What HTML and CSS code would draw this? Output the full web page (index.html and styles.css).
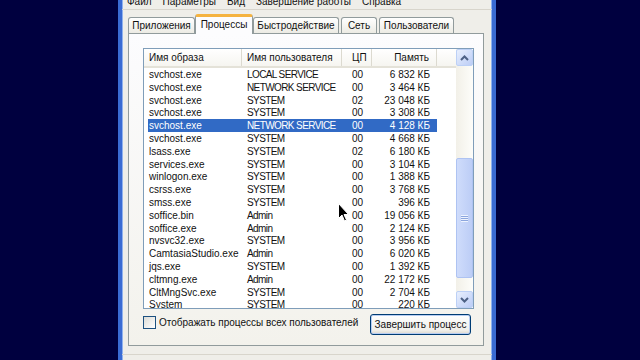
FILE: index.html
```html
<html>
    <head>
        <title>Диспетчер задач Windows</title>
        <link rel="stylesheet" href="styles.css">
    </head>
    <body>
        <div class="window">
            <div class="menubar">
                <span class="menu">Файл</span>
                <span class="menu">Параметры</span>
                <span class="menu">Вид</span>
                <span class="menu">Завершение работы</span>
                <span class="menu">Справка</span>
            </div>

            <div class="tabs">
                <div class="tab t1">Приложения</div>
                <div class="tab tab-sel">Процессы</div>
                <div class="tab t3">Быстродействие</div>
                <div class="tab t4">Сеть</div>
                <div class="tab t5">Пользователи</div>
            </div>

            <div class="panel">
                <div class="list">
                    <div class="list-body">
                        <div class="head">
                            <span>Имя образа</span>
                            <span>Имя пользователя</span>
                            <span class="cpu">ЦП</span>
                            <span class="mem">Память</span>
                            <span class="last"></span>
                        </div>
                        <div class="row"><span>svchost.exe</span><span>LOCAL SERVICE</span><span class="cpu">00</span><span class="mem">6 832 КБ</span></div>
                        <div class="row"><span>svchost.exe</span><span>NETWORK SERVICE</span><span class="cpu">00</span><span class="mem">3 464 КБ</span></div>
                        <div class="row"><span>svchost.exe</span><span>SYSTEM</span><span class="cpu">02</span><span class="mem">23 048 КБ</span></div>
                        <div class="row"><span>svchost.exe</span><span>SYSTEM</span><span class="cpu">00</span><span class="mem">3 308 КБ</span></div>
                        <div class="row sel"><span>svchost.exe</span><span>NETWORK SERVICE</span><span class="cpu">00</span><span class="mem">4 128 КБ</span></div>
                        <div class="row"><span>svchost.exe</span><span>SYSTEM</span><span class="cpu">00</span><span class="mem">4 668 КБ</span></div>
                        <div class="row"><span>lsass.exe</span><span>SYSTEM</span><span class="cpu">02</span><span class="mem">6 180 КБ</span></div>
                        <div class="row"><span>services.exe</span><span>SYSTEM</span><span class="cpu">00</span><span class="mem">3 104 КБ</span></div>
                        <div class="row"><span>winlogon.exe</span><span>SYSTEM</span><span class="cpu">00</span><span class="mem">1 388 КБ</span></div>
                        <div class="row"><span>csrss.exe</span><span>SYSTEM</span><span class="cpu">00</span><span class="mem">3 768 КБ</span></div>
                        <div class="row"><span>smss.exe</span><span>SYSTEM</span><span class="cpu">00</span><span class="mem">396 КБ</span></div>
                        <div class="row"><span>soffice.bin</span><span>Admin</span><span class="cpu">00</span><span class="mem">19 056 КБ</span></div>
                        <div class="row"><span>soffice.exe</span><span>Admin</span><span class="cpu">00</span><span class="mem">2 124 КБ</span></div>
                        <div class="row"><span>nvsvc32.exe</span><span>SYSTEM</span><span class="cpu">00</span><span class="mem">3 956 КБ</span></div>
                        <div class="row"><span>CamtasiaStudio.exe</span><span>Admin</span><span class="cpu">00</span><span class="mem">6 020 КБ</span></div>
                        <div class="row"><span>jqs.exe</span><span>SYSTEM</span><span class="cpu">00</span><span class="mem">1 392 КБ</span></div>
                        <div class="row"><span>cltmng.exe</span><span>Admin</span><span class="cpu">00</span><span class="mem">22 172 КБ</span></div>
                        <div class="row"><span>CltMngSvc.exe</span><span>SYSTEM</span><span class="cpu">00</span><span class="mem">2 704 КБ</span></div>
                        <div class="row"><span>System</span><span>SYSTEM</span><span class="cpu">00</span><span class="mem">220 КБ</span></div>
                    </div>
                    <div class="scroll">
                        <div class="sbtn">
                            <svg width="9" height="6" viewBox="0 0 9 6"><path d="M1 5 L4.5 1.5 L8 5" fill="none" stroke="#4d6185" stroke-width="2"/></svg>
                        </div>
                        <div class="track">
                            <div class="thumb">
                                <div class="grip"></div>
                            </div>
                        </div>
                        <div class="sbtn">
                            <svg width="9" height="6" viewBox="0 0 9 6"><path d="M1 1 L4.5 4.5 L8 1" fill="none" stroke="#4d6185" stroke-width="2"/></svg>
                        </div>
                    </div>
                </div>

                <div class="foot">
                    <label class="check"><span class="box"></span>Отображать процессы всех пользователей</label>
                    <button class="button">Завершить процесс</button>
                </div>
            </div>

            <div class="status"></div>
        </div>

        <svg class="cursor" width="12" height="19" viewBox="0 0 12 19">
            <path d="M0.5 0.5 L0.5 15.5 L4 12 L6.5 18 L8.5 17 L6 11.5 L10.5 11.5 Z" fill="#000" stroke="#fff" stroke-width="1"/>
        </svg>
    </body>
</html>
```

FILE: styles.css
```css
* {
    box-sizing: border-box;
}

body {
    margin: 0;
    width: 640px;
    height: 360px;
    overflow: hidden;
    background-color: #00003f;
    font-family: "Liberation Sans", Arial, sans-serif;
    font-size: 10px;
    color: #111;
    position: relative;
}

.window {
    margin-left: 118px;
    margin-top: -7px;
    width: 378px;
    height: 380px;
    background-color: #efeee9;
    border-left: 4px solid #3a6bd3;
    border-right: 4px solid #3a6bd3;
    box-shadow: inset 1px 0 #8fb1ee, inset -1px 0 #8fb1ee;
    display: flex;
    flex-direction: column;
}

.menubar {
    height: 17px;
    display: flex;
    align-items: center;
    gap: 11px;
    padding-left: 5px;
    border-bottom: 1px solid #d8d5cc;
}

.tabs {
    display: flex;
    align-items: flex-end;
    height: 19px;
    margin-top: 4px;
    padding-left: 6px;
    position: relative;
    z-index: 1;
}

.tab {
    height: 16px;
    line-height: 15px;
    text-align: center;
    border: 1px solid #919b9c;
    border-bottom: none;
    border-radius: 3px 3px 0 0;
    background: linear-gradient(#ffffff, #ecebe4);
}

.t1 { width: 67px; }
.t3 { width: 86px; }
.t4 { width: 36px; margin-left: 2px; }
.t5 { width: 75px; margin-left: 2px; }

.tab-sel {
    width: 58px;
    height: 20px;
    margin-bottom: -1px;
    line-height: 16px;
    background: #fcfcfe;
    border-top: 3px solid #f5b340;
}

.panel {
    margin-left: 6px;
    width: 356px;
    height: 313px;
    border: 1px solid #919b9c;
    background: linear-gradient(#fcfcfe, #f3f2ec);
    padding: 14px 9px 0 14px;
}

.list {
    width: 331px;
    height: 261px;
    border: 1px solid #7f9db9;
    background-color: white;
    display: flex;
}

.list-body {
    flex: 1;
    overflow: hidden;
}

.head {
    display: grid;
    grid-template-columns: 98px 100px 30px 65px 1fr;
    height: 19px;
    background: linear-gradient(#ffffff, #f6f5f0);
    border-bottom: 2px solid #e4e2d8;
}

.head span {
    line-height: 18px;
    padding-left: 5px;
    border-right: 1px solid #dcdad0;
    white-space: nowrap;
    overflow: hidden;
}

.head .last {
    border-right: none;
}

.row {
    display: grid;
    grid-template-columns: 94px 100px 30px 65px;
    width: 289px;
    margin-left: 4px;
    height: 12.8px;
    line-height: 13px;
    white-space: nowrap;
}

.row span {
    overflow: hidden;
}

.row span:first-child {
    padding-left: 1px;
}

.row span:nth-child(2) {
    padding-left: 5px;
    letter-spacing: -0.6px;
}

.row .cpu,
.head .cpu {
    padding-left: 10px;
}

.row .mem,
.head .mem {
    text-align: right;
    padding-right: 7px;
}

.sel {
    background-color: #316ac5;
    color: white;
}

.scroll {
    width: 17px;
    display: flex;
    flex-direction: column;
    background: linear-gradient(90deg, #f2f0e8, #fdfdfa);
}

.sbtn {
    height: 17px;
    border: 1px solid #bcd0f6;
    border-radius: 2px;
    background: linear-gradient(135deg, #e8effd, #bccdf6);
    display: flex;
    align-items: center;
    justify-content: center;
}

.track {
    flex: 1;
    padding-top: 92px;
}

.thumb {
    height: 120px;
    border: 1px solid #aec3f2;
    border-radius: 2px;
    background: linear-gradient(90deg, #cfdcfb, #bccdf6);
    display: flex;
    align-items: center;
    justify-content: center;
}

.grip {
    width: 7px;
    height: 7px;
    background: repeating-linear-gradient(#eef3fe 0 1px, #8ca6de 1px 2px);
}

.foot {
    display: flex;
    justify-content: space-between;
    align-items: flex-start;
    margin-top: 5px;
    padding-right: 3px;
}

.check {
    display: flex;
    align-items: center;
    gap: 3px;
    margin-top: 2px;
    line-height: 13px;
}

.box {
    width: 13px;
    height: 13px;
    border: 1px solid #1c5180;
    background: linear-gradient(135deg, #dcdcd6, #ffffff);
}

.button {
    width: 101px;
    height: 21px;
    padding: 0;
    border: 1px solid #003c74;
    border-radius: 3px;
    background: linear-gradient(#ffffff, #f0efea 80%, #dcd8ce);
    box-shadow: inset 0 0 0 1px #b7cdf2;
    font-family: "Liberation Sans", Arial, sans-serif;
    font-size: 10px;
    color: #111;
}

.status {
    margin-top: 8px;
    border-top: 1px solid #d8d5cc;
}

.cursor {
    position: absolute;
    left: 338px;
    top: 203px;
}
```
